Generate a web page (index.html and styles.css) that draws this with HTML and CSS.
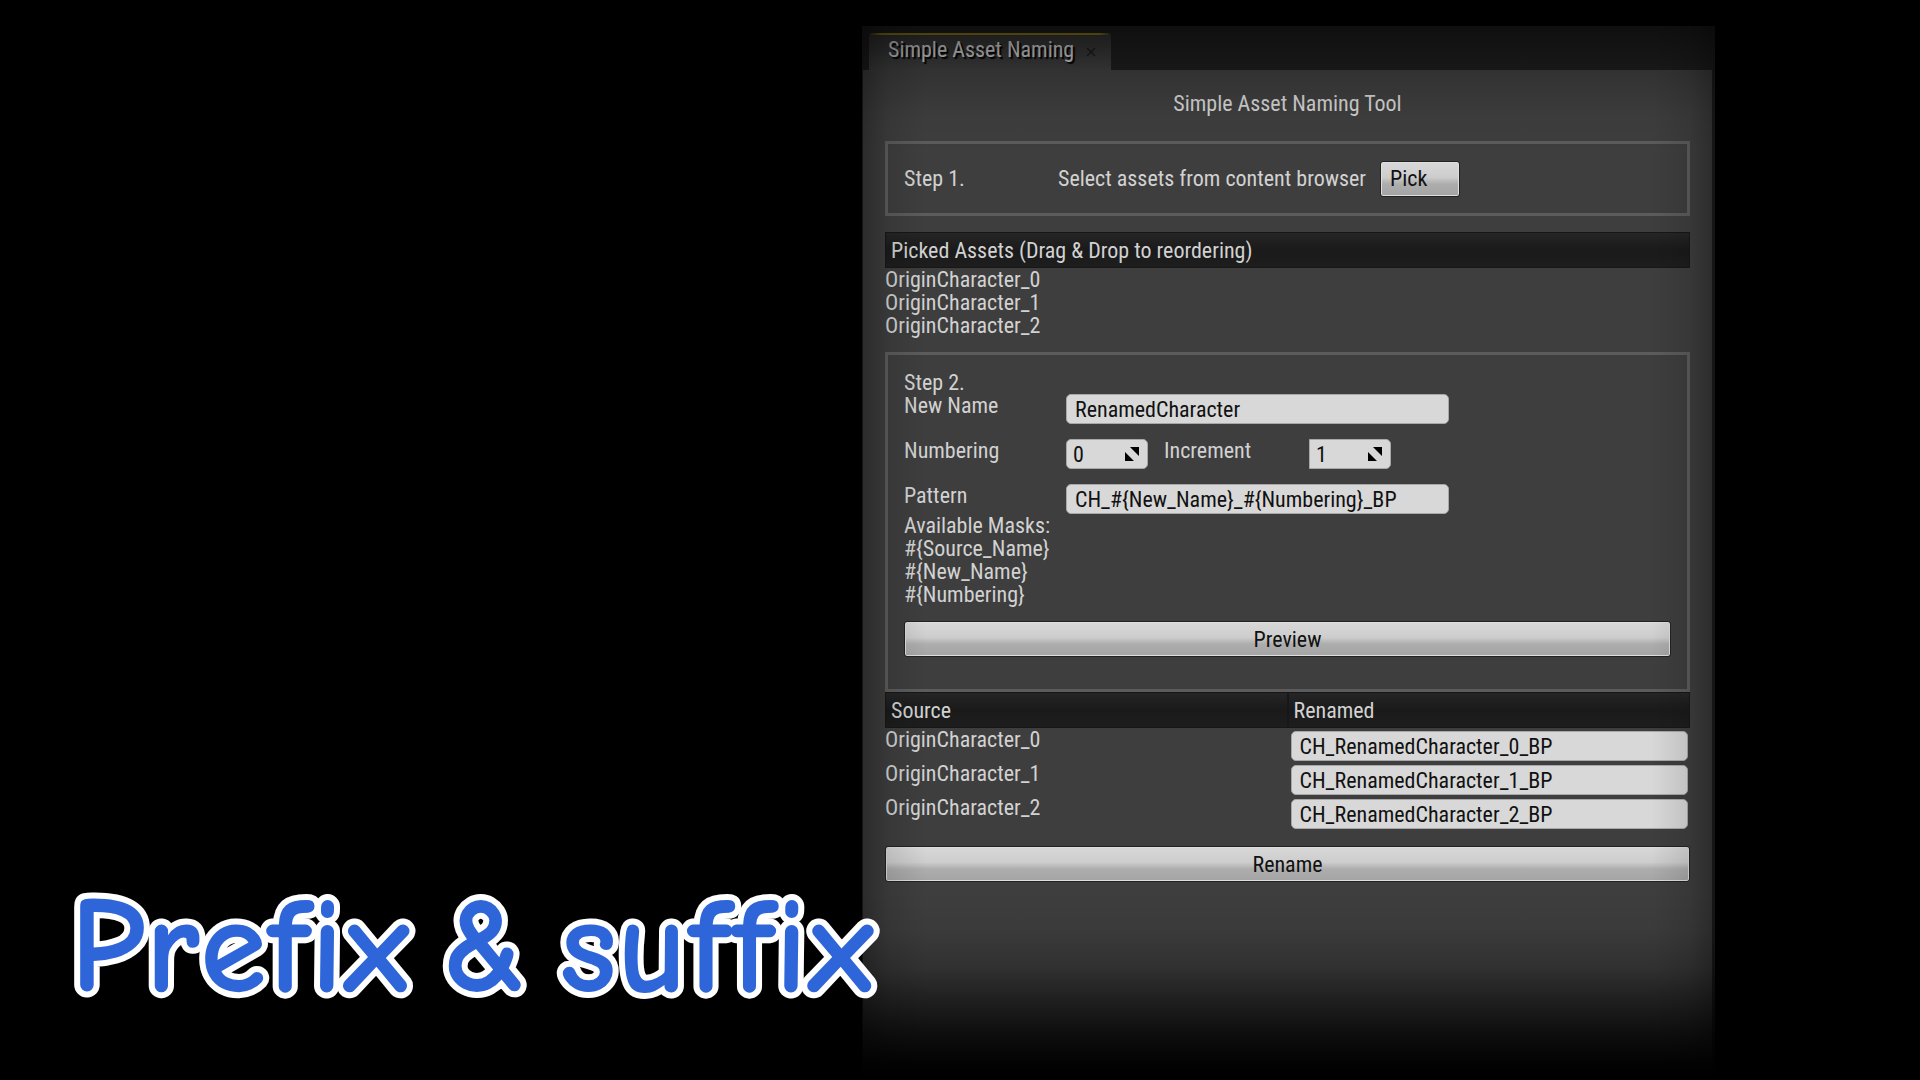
FILE: index.html
```html
<!DOCTYPE html>
<html lang="en">
<head>
<meta charset="utf-8">
<title>Simple Asset Naming</title>
<link rel="stylesheet" href="styles.css">
</head>
<body>
<main class="stage">
  <section class="panel">
    <header class="tabbar">
      <div class="tab">
        <span>Simple Asset Naming</span>
        <button class="tab-close" type="button" aria-label="Close tab">
          <svg viewBox="0 0 10 10" width="10" height="10"><path d="M1 1 9 9M9 1 1 9" stroke="currentColor" stroke-width="1.5" fill="none"/></svg>
        </button>
      </div>
    </header>
    <div class="content">
      <h1 class="title">Simple Asset Naming Tool</h1>

      <div class="box step-one">
        <span>Step 1.</span>
        <span>Select assets from content browser</span>
        <button class="button button-pick" type="button">Pick</button>
      </div>

      <table class="list picked">
        <thead><tr><th>Picked Assets (Drag &amp; Drop to reordering)</th></tr></thead>
        <tbody>
          <tr><td>OriginCharacter_0</td></tr>
          <tr><td>OriginCharacter_1</td></tr>
          <tr><td>OriginCharacter_2</td></tr>
        </tbody>
      </table>

      <form class="box step-two">
        <div>Step 2.</div>
        <div class="fields">
          <label for="new-name">New Name</label>
          <input class="field" id="new-name" type="text" value="RenamedCharacter">
          <label for="numbering">Numbering</label>
          <div class="numbers">
            <div class="spin">
              <input class="field" id="numbering" type="text" inputmode="numeric" value="0">
              <svg class="spin-icon" viewBox="0 0 14 14" width="14" height="14"><path d="M5 0H14V9ZM0 5V14H9Z"/></svg>
            </div>
            <label for="increment">Increment</label>
            <div class="spin">
              <input class="field field-square" id="increment" type="text" inputmode="numeric" value="1">
              <svg class="spin-icon" viewBox="0 0 14 14" width="14" height="14"><path d="M5 0H14V9ZM0 5V14H9Z"/></svg>
            </div>
          </div>
          <label for="pattern">Pattern</label>
          <input class="field" id="pattern" type="text" value="CH_#{New_Name}_#{Numbering}_BP">
        </div>
        <div>Available Masks:</div>
        <div>#{Source_Name}</div>
        <div>#{New_Name}</div>
        <div>#{Numbering}</div>
        <button class="button button-wide button-preview" type="button">Preview</button>
      </form>

      <table class="list renames">
        <thead><tr><th>Source</th><th>Renamed</th></tr></thead>
        <tbody>
          <tr><td>OriginCharacter_0</td><td><input class="field" type="text" aria-label="New name for OriginCharacter_0" value="CH_RenamedCharacter_0_BP"></td></tr>
          <tr><td>OriginCharacter_1</td><td><input class="field" type="text" aria-label="New name for OriginCharacter_1" value="CH_RenamedCharacter_1_BP"></td></tr>
          <tr><td>OriginCharacter_2</td><td><input class="field" type="text" aria-label="New name for OriginCharacter_2" value="CH_RenamedCharacter_2_BP"></td></tr>
        </tbody>
      </table>

      <button class="button button-wide button-rename" type="button">Rename</button>
    </div>
  </section>
  <p class="caption"><span>Prefix</span> <span>&amp;</span> <span>suffix</span></p>
</main>
</body>
</html>
```
FILE: styles.css
```css
* {
  box-sizing: border-box;
}

body {
  margin: 0;
  background: #000;
  color: #d2d2d2;
  font: 22px/23px "Roboto Condensed", Roboto, sans-serif;
}

button,
input {
  font: inherit;
}

.stage {
  position: relative;
  display: grid;
  grid-template-columns: 862fr 853fr 205fr;
  min-height: 100vh;
  padding-top: 26px;
}

.panel {
  position: relative;
  grid-column: 2;
  display: flex;
  flex-direction: column;
  background: #1e1e1e;
}

/* Vignette over the whole panel */
.panel::after {
  content: "";
  position: absolute;
  inset: 0;
  pointer-events: none;
  background:
    linear-gradient(to bottom, rgba(0, 0, 0, 0.5), rgba(0, 0, 0, 0.2) 44px, rgba(0, 0, 0, 0.04) 90px, transparent 130px),
    linear-gradient(to top, #000, rgba(0, 0, 0, 0.96) 16px, rgba(0, 0, 0, 0.78) 46px, rgba(0, 0, 0, 0.5) 80px, rgba(0, 0, 0, 0.22) 112px, rgba(0, 0, 0, 0.06) 150px, transparent 190px),
    linear-gradient(to right, rgba(0, 0, 0, 0.3), rgba(0, 0, 0, 0.1) 26px, transparent 64px),
    linear-gradient(to left, rgba(0, 0, 0, 0.3), rgba(0, 0, 0, 0.1) 26px, transparent 64px);
}

.tabbar {
  display: flex;
  height: 44px;
  padding: 7px 7px 0;
}

.tab {
  display: flex;
  align-items: center;
  gap: 12px;
  padding: 0 15px 4px 19px;
  background: linear-gradient(to right, transparent, #8c7a10 12px, #8c7a10 calc(100% - 12px), transparent) top / 100% 2px no-repeat, linear-gradient(#343434, #3e3e3e);
  border-radius: 3px 3px 0 0;
  text-shadow: 2px 2px 1px #000;
}

.tab-close {
  display: flex;
  padding: 4px 0 0;
  border: 0;
  background: none;
  color: #1c1c1c;
}

.content {
  flex: 1;
  margin: 0 3px 0 1px;
  padding: 22px 22px 0;
  background: #3e3e3e;
}

.title {
  margin: 0 0 26px;
  font: inherit;
  text-align: center;
}

.box {
  border: 3px solid #5c5c5c;
  padding: 16px;
}

.step-one {
  display: flex;
  align-items: center;
  height: 75px;
}

.step-one > :first-child {
  width: 154px;
}

.button {
  height: 36px;
  border: 1px solid #222;
  border-radius: 3px;
  background: linear-gradient(#d8d8d8, #cdcdcd 45%, #adadad 65%, #a4a4a4);
  box-shadow: inset 0 0 0 1px #dedede;
  color: #111;
}

.button-pick {
  width: 80px;
  margin-left: 14px;
  padding: 0 9px;
  text-align: left;
}

.button-wide {
  display: block;
  width: 100%;
}

.list {
  width: 100%;
  border-spacing: 0;
  table-layout: fixed;
}

.list th {
  height: 36px;
  padding: 0 6px;
  background: linear-gradient(#262626, #1a1a1a 50%, #1e1e1e);
  box-shadow: inset 0 0 0 1px #171717;
  font-weight: normal;
  text-align: left;
}

.list td {
  padding: 0;
  vertical-align: top;
}

.picked {
  margin: 16px 0 15px;
}

.step-two {
  padding-bottom: 32px;
}

.fields {
  display: grid;
  grid-template-columns: 162px 383px;
  row-gap: 15px;
}

.field {
  display: block;
  width: 100%;
  height: 30px;
  padding: 0 8px;
  border: 1px solid #a8a8a8;
  border-radius: 5px;
  background: #d8d8d8;
  color: #111;
}

.numbers {
  display: flex;
}

.numbers label {
  width: 145px;
  margin-left: 16px;
}

.spin {
  position: relative;
  width: 82px;
}

.spin .field {
  padding: 0 6px;
}

.field-square {
  border-radius: 0 5px 5px 0;
}

.spin-icon {
  position: absolute;
  top: 8px;
  right: 9px;
}

.button-preview {
  margin-top: 15px;
}

.renames td {
  height: 34px;
}

.renames td + td {
  padding: 3px 2px 0 3px;
}

.button-rename {
  margin-top: 16px;
}

.caption {
  position: absolute;
  left: 70px;
  bottom: 58px;
  display: flex;
  gap: 32px;
  margin: 0;
  color: #2e66da;
  font: bold 136px/150px "Comic Neue", "Comic Relief", "Comic Sans MS", cursive;
  font-kerning: none;
  font-variant-ligatures: none;
  white-space: nowrap;
  -webkit-text-stroke: 12px #fff;
  paint-order: stroke fill;
  stroke-linejoin: round;
}
```
